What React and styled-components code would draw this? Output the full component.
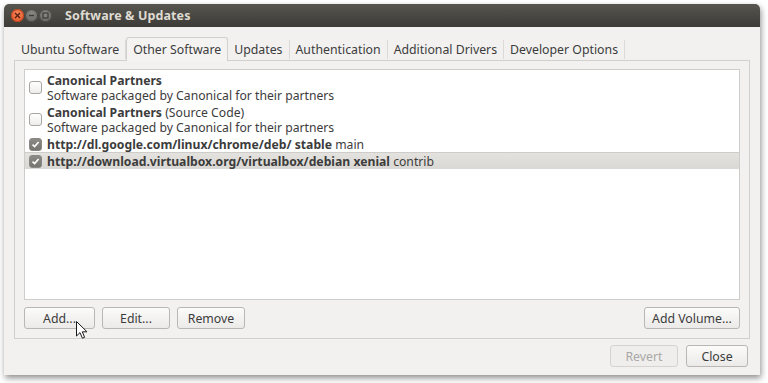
import styled, { createGlobalStyle } from 'styled-components';

const Global = createGlobalStyle`
  body {
    margin: 0;
    background: #ffffff;
    font-family: "Noto Sans", "Open Sans", sans-serif;
    color: #3c3c3c;
  }
`;

const Page = styled.div`
  width: 768px;
  height: 383px;
  padding: 4px 0 0 4px;
  box-sizing: border-box;
  position: relative;
`;

const Window = styled.div`
  width: 756px;
  height: 371px;
  background: #f2f1f0;
  border-radius: 5px 5px 0 0;
  box-shadow: 1px 3px 6px rgba(0, 0, 0, 0.45);
  display: flex;
  flex-direction: column;
`;

const TitleBar = styled.div`
  height: 23px;
  background: linear-gradient(#57554f, #3c3b37);
  border-radius: 5px 5px 0 0;
  display: flex;
  align-items: center;
  padding-left: 7px;
  gap: 1px;
`;

const WinButton = styled.div`
  width: 13px;
  height: 13px;
  border-radius: 50%;
  background: ${p => (p.close ? 'radial-gradient(circle at 50% 35%, #f7855c, #e0501f)' : 'radial-gradient(circle at 50% 35%, #8a8882, #65635e)')};
  box-shadow: inset 0 0 0 1px ${p => (p.close ? '#b8441e' : '#4a4945')};
  display: flex;
  align-items: center;
  justify-content: center;
`;

const Title = styled.div`
  margin-left: 12px;
  color: #dfdbd2;
  font-weight: bold;
  font-size: 12.5px;
  letter-spacing: 0.1px;
`;

const Body = styled.div`
  flex: 1;
  display: flex;
  flex-direction: column;
  padding: 10px 10px 6px 10px;
`;

const Tabs = styled.div`
  display: flex;
  height: 23px;
  padding-left: 1px;
`;

const Tab = styled.div`
  font-size: 12.3px;
  padding: 0 6px;
  display: flex;
  align-items: center;
  position: relative;
  color: #3c3c3c;
  ${p => p.active ? `
    border: 1px solid #d2d0cc;
    border-bottom: none;
    border-radius: 3px 3px 0 0;
    background: #f4f3f2;
    margin-bottom: -1px;
    z-index: 1;
  ` : `
    border-right: 1px solid #dcdad6;
    height: 19px;
    margin-top: 3px;
  `}
`;

const Panel = styled.div`
  border: 1px solid #d2d0cc;
  flex: 0 0 auto;
  height: 279px;
  padding: 8px 9px 9px 9px;
  display: flex;
  flex-direction: column;
  box-sizing: border-box;
`;

const List = styled.div`
  flex: 1;
  background: #ffffff;
  border: 1px solid #cfcdca;
  padding-top: 1px;
`;

const Row = styled.div`
  display: flex;
  align-items: center;
  box-sizing: border-box;
  padding: 1px 0 0 4px;
  height: ${p => (p.tall ? '32px' : '17px')};
  background: ${p => (p.selected ? 'linear-gradient(#e4e2de, #dad8d4)' : 'transparent')};
  border-top: ${p => (p.selected ? '1px solid #cfcdc9' : 'none')};
  font-size: 12.2px;
  line-height: 15px;
`;

const Check = styled.div`
  width: 11px;
  height: 11px;
  border: 1px solid ${p => (p.checked ? '#8a8884' : '#a8a6a2')};
  border-radius: 3px;
  background: ${p => (p.checked ? 'linear-gradient(#8c8a86, #77756f)' : 'linear-gradient(#ffffff, #eeedeb)')};
  margin-right: 5px;
  display: flex;
  align-items: center;
  justify-content: center;
  flex: none;
`;

const Text = styled.div`
  display: flex;
  flex-direction: column;
`;

const Bold = styled.span`
  font-weight: bold;
`;

const ButtonRow = styled.div`
  display: flex;
  gap: 7px;
  margin-top: 7px;
`;

const Button = styled.div`
  height: 22px;
  box-sizing: border-box;
  width: ${p => p.w || 68}px;
  border: 1px solid ${p => (p.disabled ? '#d6d4d0' : '#b9b7b3')};
  border-radius: 3px;
  background: ${p => (p.disabled ? '#efeeec' : 'linear-gradient(#fbfbfa, #ebeae8)')};
  color: ${p => (p.disabled ? '#a9a8a5' : '#3c3c3c')};
  font-size: 12.3px;
  display: flex;
  align-items: center;
  justify-content: center;
  ${p => p.push && 'margin-left: auto;'}
`;

const Footer = styled.div`
  display: flex;
  justify-content: flex-end;
  gap: 8px;
  margin-top: 6px;
  padding-right: 2px;
`;

const Cursor = styled.svg`
  position: absolute;
  left: 76px;
  top: 321px;
`;

function Checkbox({ checked }) {
  return (
    <Check checked={checked}>
      {checked && (
        <svg width="9" height="9" viewBox="0 0 9 9">
          <path d="M1.5 4.6 L3.6 6.6 L7.6 2" fill="none" stroke="#ffffff" strokeWidth="1.6" />
        </svg>
      )}
    </Check>
  );
}

export default function App() {
  return (
    <Page>
      <Global />
      <Window>
        <TitleBar>
          <WinButton close>
            <svg width="7" height="7" viewBox="0 0 7 7">
              <path d="M1 1 L6 6 M6 1 L1 6" stroke="#5a2010" strokeWidth="1.4" />
            </svg>
          </WinButton>
          <WinButton>
            <svg width="7" height="7" viewBox="0 0 7 7">
              <path d="M1 3.5 L6 3.5" stroke="#3c3b37" strokeWidth="1.4" />
            </svg>
          </WinButton>
          <WinButton>
            <svg width="7" height="7" viewBox="0 0 7 7">
              <rect x="1" y="1" width="5" height="5" fill="none" stroke="#3c3b37" strokeWidth="1.2" />
            </svg>
          </WinButton>
          <Title>Software &amp; Updates</Title>
        </TitleBar>
        <Body>
          <Tabs>
            <Tab>Ubuntu Software</Tab>
            <Tab active>Other Software</Tab>
            <Tab>Updates</Tab>
            <Tab>Authentication</Tab>
            <Tab>Additional Drivers</Tab>
            <Tab>Developer Options</Tab>
          </Tabs>
          <Panel>
            <List>
              <Row tall>
                <Checkbox />
                <Text>
                  <Bold>Canonical Partners</Bold>
                  <span>Software packaged by Canonical for their partners</span>
                </Text>
              </Row>
              <Row tall>
                <Checkbox />
                <Text>
                  <span><Bold>Canonical Partners</Bold> (Source Code)</span>
                  <span>Software packaged by Canonical for their partners</span>
                </Text>
              </Row>
              <Row>
                <Checkbox checked />
                <span><Bold>http://dl.google.com/linux/chrome/deb/ stable</Bold> main</span>
              </Row>
              <Row selected>
                <Checkbox checked />
                <span><Bold>http://download.virtualbox.org/virtualbox/debian xenial</Bold> contrib</span>
              </Row>
            </List>
            <ButtonRow>
              <Button w={71}>Add...</Button>
              <Button>Edit...</Button>
              <Button>Remove</Button>
              <Button push w={96}>Add Volume...</Button>
            </ButtonRow>
          </Panel>
          <Footer>
            <Button disabled>Revert</Button>
            <Button w={62}>Close</Button>
          </Footer>
        </Body>
      </Window>
      <Cursor width="12" height="19" viewBox="0 0 12 19">
        <path d="M0.5 0.5 L0.5 15 L4 11.6 L6.4 17.2 L8.6 16.3 L6.3 10.8 L11 10.8 Z" fill="#ffffff" stroke="#1a1a1a" strokeWidth="1" strokeLinejoin="round" />
      </Cursor>
    </Page>
  );
}
